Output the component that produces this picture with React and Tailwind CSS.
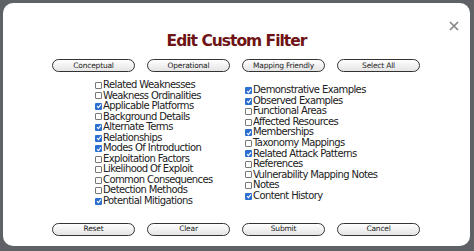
const left = [
  ['Related Weaknesses', false],
  ['Weakness Ordinalities', false],
  ['Applicable Platforms', true],
  ['Background Details', false],
  ['Alternate Terms', true],
  ['Relationships', true],
  ['Modes Of Introduction', true],
  ['Exploitation Factors', false],
  ['Likelihood Of Exploit', false],
  ['Common Consequences', false],
  ['Detection Methods', false],
  ['Potential Mitigations', true],
];

const right = [
  ['Demonstrative Examples', true],
  ['Observed Examples', true],
  ['Functional Areas', false],
  ['Affected Resources', false],
  ['Memberships', true],
  ['Taxonomy Mappings', false],
  ['Related Attack Patterns', true],
  ['References', false],
  ['Vulnerability Mapping Notes', false],
  ['Notes', false],
  ['Content History', true],
];

function Box({ checked }) {
  if (checked) {
    return (
      <span className="w-[7px] h-[7px] rounded-[1px] bg-[#2b6fd1] flex items-center justify-center mr-[1px] shrink-0">
        <svg width="6" height="6" viewBox="0 0 6 6">
          <path d="M1 3.2 L2.4 4.6 L5 1.4" stroke="white" strokeWidth="1.1" fill="none" />
        </svg>
      </span>
    );
  }
  return <span className="w-[7px] h-[7px] rounded-[1px] border border-[#777] bg-white mr-[1px] shrink-0" />;
}

function Item({ label, checked }) {
  return (
    <div className="flex items-center h-[10.55px] text-[10px] tracking-[-0.6px] leading-[10.55px] text-[#222] whitespace-nowrap">
      <Box checked={checked} />
      <span>{label}</span>
    </div>
  );
}

function Pill({ children }) {
  return (
    <button className="w-[83px] h-[13px] rounded-full border border-[#333] border-r-[1.5px] bg-gradient-to-b from-white to-[#e4e4e4] text-[7.5px] tracking-[-0.2px] leading-none text-[#222] flex items-center justify-center">
      {children}
    </button>
  );
}

export default function App() {
  return (
    <div className="w-[474px] h-[251px] bg-[#5e6165] p-[3px] pr-[4px] pb-[5px]" style={{ fontFamily: '"DejaVu Sans", Verdana, sans-serif' }}>
      <div className="relative w-full h-full bg-white rounded-[10px] flex flex-col">
        <svg className="absolute right-[11px] top-[18px]" width="10" height="10" viewBox="0 0 10 10">
          <path d="M1 1 L9 9 M9 1 L1 9" stroke="#858585" strokeWidth="1.7" />
        </svg>
        <h1 className="mt-[29px] text-center text-[15.5px] font-bold tracking-[-1px] text-[#6e1414] leading-[18px]">Edit Custom Filter</h1>
        <div className="flex justify-center gap-[12px] mt-[9px] pr-[1px]">
          <Pill>Conceptual</Pill>
          <Pill>Operational</Pill>
          <Pill>Mapping Friendly</Pill>
          <Pill>Select All</Pill>
        </div>
        <div className="flex items-center mt-[8px] pl-[92px]">
          <div className="w-[150px] flex flex-col">
            {left.map(([l, c]) => <Item key={l} label={l} checked={c} />)}
          </div>
          <div className="flex flex-col">
            {right.map(([l, c]) => <Item key={l} label={l} checked={c} />)}
          </div>
        </div>
        <div className="flex justify-center gap-[12px] mt-[16px] pr-[1px]">
          <Pill>Reset</Pill>
          <Pill>Clear</Pill>
          <Pill>Submit</Pill>
          <Pill>Cancel</Pill>
        </div>
      </div>
    </div>
  );
}
